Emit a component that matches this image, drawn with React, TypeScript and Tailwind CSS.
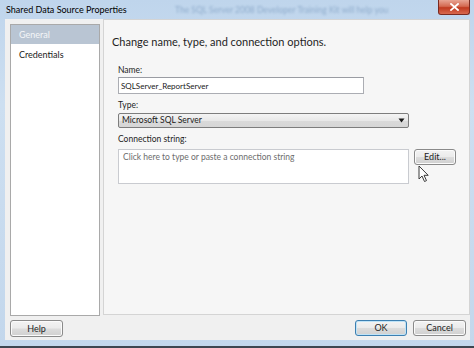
import React from "react";

const font = { fontFamily: 'Lato, "Noto Sans", sans-serif' };

function Win7Button({ label, className = "", def = false }: { label: string; className?: string; def?: boolean }) {
  return (
    <div
      className={`flex items-center justify-center rounded-[3px] border text-[9px] text-[#1e1e1e] ${
        def ? "border-[#3c7fb1] shadow-[inset_0_0_0_1px_#bfe3f7]" : "border-[#8a8a8a] shadow-[inset_0_0_0_1px_#fbfbfb]"
      } bg-[linear-gradient(#f3f3f3_0%,#ebebeb_48%,#dcdcdc_52%,#d0d0d0_100%)] ${className}`}
    >
      {label}
    </div>
  );
}

export default function App() {
  return (
    <div
      className="relative flex h-[348px] w-[474px] flex-col overflow-hidden bg-[linear-gradient(#bfd5ec,#cddff1_30%,#c3d7ec)]"
      style={font}
    >
      {/* Title bar */}
      <div className="relative flex h-[19px] shrink-0 items-center pl-[6px]">
        <span className="text-[9px] leading-none text-black">Shared Data Source Properties</span>
        <span className="absolute left-[175px] top-[4px] text-[8.5px] text-[#6d8fb5] opacity-60 blur-[1.3px]">
          The SQL Server 2008 Developer Training Kit will help you
        </span>
      </div>
      <div className="absolute right-[4px] top-0 flex h-[15px] w-[32px] items-center justify-center rounded-b-[3px] border border-t-0 border-[#7a2a20] bg-[linear-gradient(#e8a493,#d46a52_45%,#c03a20_55%,#d8694e)]">
        <svg width="9" height="8" viewBox="0 0 9 8">
          <path d="M1 1 L8 7 M8 1 L1 7" stroke="#ffffff" strokeWidth="1.8" strokeLinecap="square" />
        </svg>
      </div>

      {/* Body */}
      <div className="ml-[5px] mr-[4px] flex h-[321px] shrink-0 flex-col bg-[#f0f0f0]">
        <div className="flex h-[297px] items-start">
          {/* Nav */}
          <div className="ml-[5px] mt-[5px] flex h-[292px] w-[90px] flex-col border border-[#a9a9a9] bg-white">
            <div className="flex h-[19px] items-center bg-[#b9c5d3] pl-[8px] text-[9px] text-[#f4f6f8]">General</div>
            <div className="flex h-[21px] items-center pl-[8px] text-[9px] text-[#1a1a1a]">Credentials</div>
          </div>
          {/* Panel */}
          <div className="relative ml-[3px] flex h-[296px] flex-1 flex-col border border-[#d4d4d4] bg-[#f6f6f6] pl-[8px]">
            <div className="mt-[14px] text-[11px] leading-[16px] text-[#1e1e1e]">
              Change name, type, and connection options.
            </div>
            <div className="ml-[6px] mt-[14px] flex flex-col">
              <div className="text-[8.5px] leading-[12px] text-[#1e1e1e]">Name:</div>
              <div className="mt-[1px] flex h-[17px] w-[246px] items-center border border-[#abadb3] border-t-[#9a9ca3] bg-white pl-[2px] text-[8px] text-[#1a1a1a]">
                SQLServer_ReportServer
              </div>
              <div className="mt-[5px] text-[8.5px] leading-[12px] text-[#1e1e1e]">Type:</div>
              <div className="mt-[2px] flex h-[15px] w-[291px] items-center justify-between rounded-[2px] border border-[#7d7d7d] bg-[linear-gradient(#f4f4f4,#e8e8e8_50%,#dadada_51%,#d6d6d6)] pl-[3px] pr-[3px] text-[8.5px] text-[#1a1a1a]">
                <span>Microsoft SQL Server</span>
                <svg width="7" height="5" viewBox="0 0 7 5">
                  <path d="M0.5 0.5 L6.5 0.5 L3.5 4.5 Z" fill="#1a1a1a" />
                </svg>
              </div>
              <div className="mt-[5px] text-[8.5px] leading-[12px] text-[#1e1e1e]">Connection string:</div>
              <div className="mt-[4px] flex items-start gap-[5px]">
                <div className="h-[35px] w-[291px] border border-[#c9cbd0] bg-white pl-[4px] pt-[1px] text-[8.5px] leading-[12px] text-[#6d6d6d]">
                  Click here to type or paste a connection string
                </div>
                <Win7Button label="Edit..." className="h-[16px] w-[42px]" />
              </div>
            </div>
            {/* cursor */}
            <svg
              className="absolute left-[314px] top-[145px]"
              width="12"
              height="18"
              viewBox="0 0 12 18"
            >
              <path
                d="M1 1 L1 14 L4 11 L6.5 16.5 L8.5 15.6 L6 10.3 L10.2 10.3 Z"
                fill="#ffffff"
                stroke="#3a3a3a"
                strokeWidth="1"
                strokeLinejoin="round"
              />
            </svg>
          </div>
        </div>
        {/* Bottom buttons */}
        <div className="mt-[4px] flex items-start">
          <Win7Button label="Help" className="ml-[5px] h-[17px] w-[53px]" />
          <div className="flex-1" />
          <Win7Button label="OK" def className="h-[16px] w-[52px]" />
          <Win7Button label="Cancel" className="ml-[6px] mr-[4px] h-[16px] w-[53px]" />
        </div>
      </div>
      <div className="flex-1 border-b-[2px] border-[#3d4650]" />
    </div>
  );
}
